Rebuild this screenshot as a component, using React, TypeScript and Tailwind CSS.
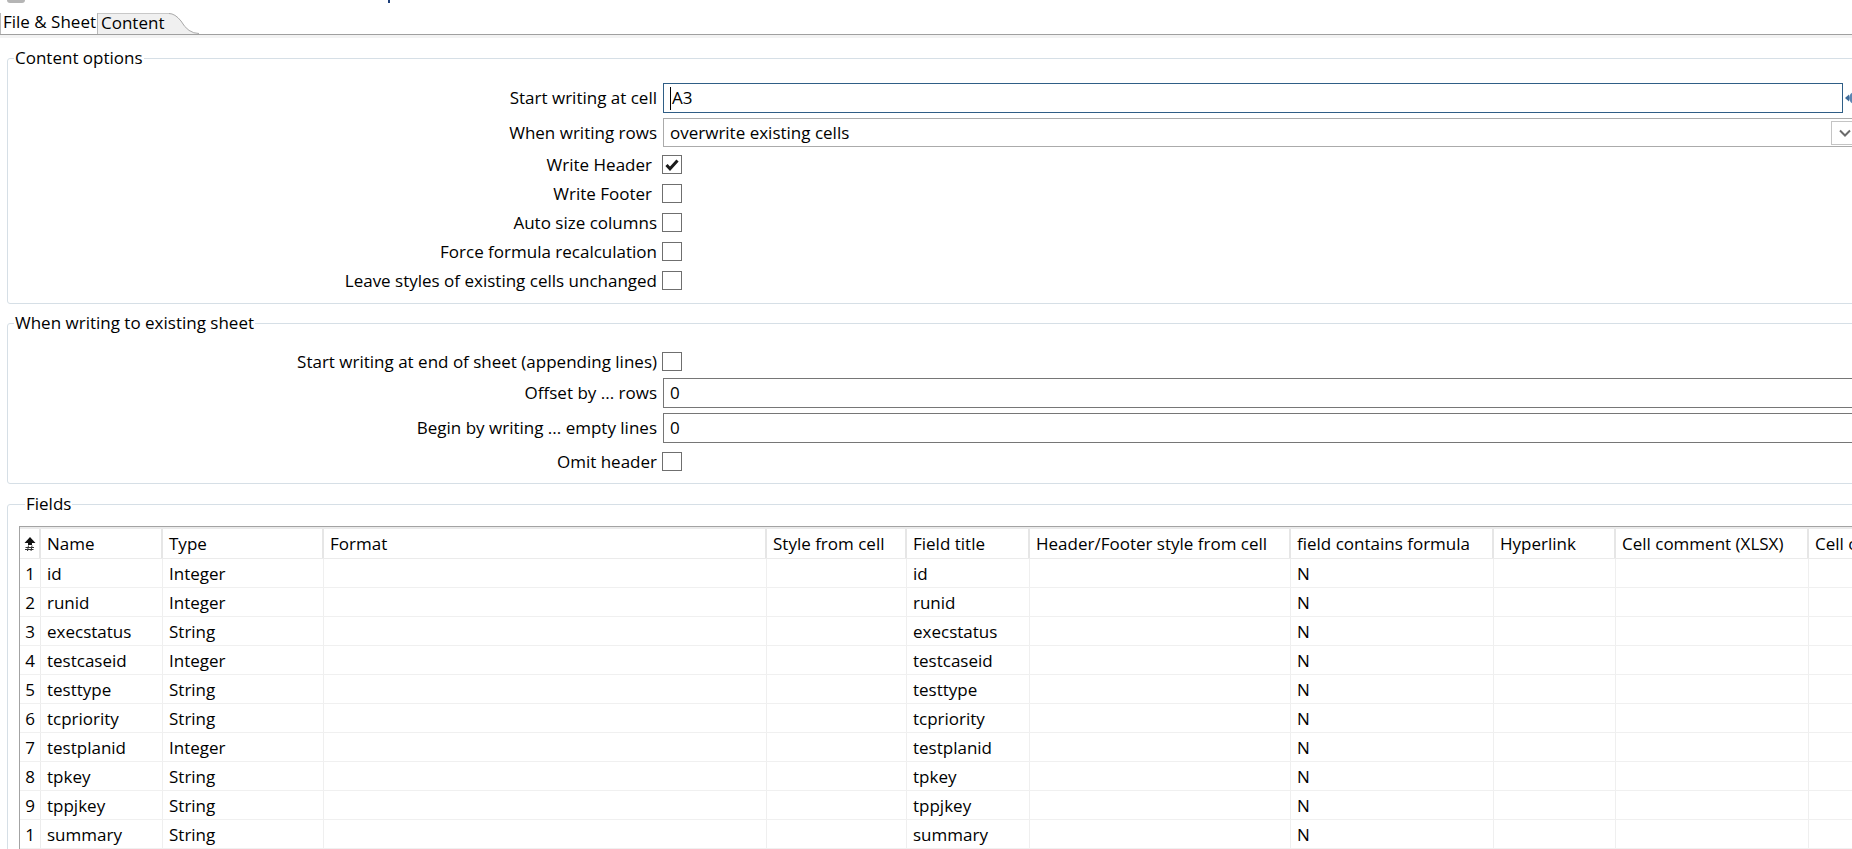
import React from 'react';

interface Col {
  title: string;
  w: string;
}

const columns: Col[] = [
  { title: 'Name', w: 'w-[122px]' },
  { title: 'Type', w: 'w-[161px]' },
  { title: 'Format', w: 'w-[443px]' },
  { title: 'Style from cell', w: 'w-[140px]' },
  { title: 'Field title', w: 'w-[123px]' },
  { title: 'Header/Footer style from cell', w: 'w-[261px]' },
  { title: 'field contains formula', w: 'w-[203px]' },
  { title: 'Hyperlink', w: 'w-[122px]' },
  { title: 'Cell comment (XLSX)', w: 'w-[193px]' },
  { title: 'Cell comment author', w: 'w-[200px]' },
];

const fields = [
  ['1', 'id', 'Integer'],
  ['2', 'runid', 'Integer'],
  ['3', 'execstatus', 'String'],
  ['4', 'testcaseid', 'Integer'],
  ['5', 'testtype', 'String'],
  ['6', 'tcpriority', 'String'],
  ['7', 'testplanid', 'Integer'],
  ['8', 'tpkey', 'String'],
  ['9', 'tppjkey', 'String'],
  ['1', 'summary', 'String'],
];

const CheckBox: React.FC<{ checked?: boolean }> = ({ checked }) => (
  <span className="w-[20px] h-[19px] border border-[#6f6f6f] bg-white flex items-center justify-center">
    {checked && (
      <svg width="14" height="12" viewBox="0 0 14 12">
        <path d="M1.5 6 L5 9.8 L12.5 1.5" fill="none" stroke="#1a1a1a" strokeWidth="3" />
      </svg>
    )}
  </span>
);

const Row: React.FC<{ label: string; h: string; extra?: string; labelPad?: string; children: React.ReactNode }> = ({
  label,
  h,
  extra = '',
  labelPad = '',
  children,
}) => (
  <div className={`flex items-center ${h} ${extra}`}>
    <div className={`w-[649px] shrink-0 text-right whitespace-nowrap ${labelPad}`}>{label}</div>
    <div className="ml-[5px] flex-1 flex items-center h-full">{children}</div>
  </div>
);

const Group: React.FC<{ title: string; extra: string; children: React.ReactNode }> = ({ title, extra, children }) => (
  <fieldset className={`ml-[7px] w-[1900px] border border-[#d6dfe6] rounded-[3px] ${extra}`}>
    <legend className="ml-[6px] px-[1px] leading-[22px]">{title}</legend>
    {children}
  </fieldset>
);

export default function App() {
  return (
    <div className="w-[1852px] h-[849px] overflow-hidden bg-white text-black text-[17px] leading-[22px] font-['Open_Sans',sans-serif]">
      {/* clipped title strip */}
      <div className="h-[13px] flex items-start">
        <span className="ml-[7px] w-[18px] h-[3px] rounded-b-full bg-[#b5b5b5]" />
        <span className="ml-[363px] w-[2px] h-[3px] bg-[#1d3f7a]" />
      </div>

      {/* tabs */}
      <div className="h-[22px] flex items-end border-b border-[#a0a0a0]">
        <div className="h-[21px] w-[98px] border-l border-r border-[#b9b9b9] bg-white pl-[2px] leading-[18px]">
          File &amp; Sheet
        </div>
        <div className="h-[21px] flex">
          <div className="h-[21px] w-[71px] border-t border-[#c8c8c8] bg-[#f0f0f0] pl-[3px] leading-[18px]">Content</div>
          <svg width="30" height="21" viewBox="0 0 30 21" className="block">
            <path d="M0 0.5 Q6 0.5 12 8 Q19 20.5 30 21 L0 21 Z" fill="#f0f0f0" />
            <path d="M0 0.5 Q6 0.5 12 8 Q19 20.5 30 20.5" fill="none" stroke="#a8a8a8" />
          </svg>
        </div>
      </div>
      <div className="h-[3px] bg-[#f3f3f3]" />

      <Group title="Content options" extra="mt-[9px] pt-[14px] pb-[8px]">
        <Row label="Start writing at cell" h="h-[30px]">
          <div className="ml-[1px] w-[1180px] h-full border border-[#2f5e86] flex items-center pl-[6px]">
            <span className="w-px h-[23px] bg-black" />
            <span className="ml-[1px]">A3</span>
          </div>
          <svg width="16" height="14" viewBox="0 0 16 14" className="ml-[2px] shrink-0">
            <path d="M0 7 L4 3.5 L4 10.5 Z" fill="#3e6b99" />
            <circle cx="10" cy="7" r="6" fill="#5b86b3" />
            <path d="M7.5 5 Q10 3 12 5 M8 9 Q10 11 12.5 9" stroke="#dfe9f3" strokeWidth="1.3" fill="none" />
          </svg>
        </Row>
        <Row label="When writing rows" h="h-[29px]" extra="mt-[5px]">
          <div className="ml-[1px] w-[1196px] h-full border border-[#ababab] flex items-center pl-[6px]">
            <span className="flex-1">overwrite existing cells</span>
            <span className="w-[27px] h-[24px] border border-[#c4c4c4] flex items-center justify-center">
              <svg width="12" height="8" viewBox="0 0 12 8">
                <path d="M1 1.5 L6 6.5 L11 1.5" fill="none" stroke="#6b6b6b" strokeWidth="2" />
              </svg>
            </span>
          </div>
        </Row>
        <Row label="Write Header" h="h-[29px]" extra="mt-[3px]" labelPad="pr-[5px]">
          <CheckBox checked />
        </Row>
        <Row label="Write Footer" h="h-[29px]" labelPad="pr-[5px]">
          <CheckBox />
        </Row>
        <Row label="Auto size columns" h="h-[29px]">
          <CheckBox />
        </Row>
        <Row label="Force formula recalculation" h="h-[29px]">
          <CheckBox />
        </Row>
        <Row label="Leave styles of existing cells unchanged" h="h-[29px]">
          <CheckBox />
        </Row>
      </Group>

      <Group title="When writing to existing sheet" extra="mt-[8px] pt-[13px] pb-[7px]">
        <Row label="Start writing at end of sheet (appending lines)" h="h-[29px]">
          <CheckBox />
        </Row>
        <Row label="Offset by ... rows" h="h-[30px]" extra="mt-[2px]">
          <div className="ml-[1px] w-[1250px] h-full border border-[#767676] flex items-center pl-[6px]">0</div>
        </Row>
        <Row label="Begin by writing ... empty lines" h="h-[30px]" extra="mt-[5px]">
          <div className="ml-[1px] w-[1250px] h-full border border-[#767676] flex items-center pl-[6px]">0</div>
        </Row>
        <Row label="Omit header" h="h-[29px]" extra="mt-[4px]">
          <CheckBox />
        </Row>
      </Group>

      <Group title="Fields" extra="mt-[9px] pt-[11px] pl-[11px] pb-[20px]">
        <div className="w-[2000px] border-t border-l border-[#a3a3a3]">
          <div className="h-[32px] flex border-t-2 border-b border-[#ebebeb]">
            <div className="w-[21px] shrink-0 h-full flex items-center justify-center border-r-2 border-[#e6e6e6]">
              <svg width="12" height="14" viewBox="0 0 12 14">
                <path d="M6 0 L11.5 6 L8 6 L8 8 L4 8 L4 6 L0.5 6 Z" fill="#111" />
                <path d="M4.5 8.5 L3.5 14 M8 8.5 L7 14 M1.5 10.5 L10 10.5 M1 12.5 L9.5 12.5" stroke="#333" strokeWidth="1" />
              </svg>
            </div>
            {columns.map((c) => (
              <div
                key={c.title}
                className={`${c.w} shrink-0 h-full flex items-center pt-[1px] px-[6px] border-r-2 border-[#e6e6e6] whitespace-nowrap overflow-hidden`}
              >
                {c.title}
              </div>
            ))}
          </div>
          {fields.map((f, i) => {
            const cells = [f[1], f[2], '', '', f[1], '', 'N', '', '', ''];
            return (
              <div key={i} className="h-[29px] flex border-b border-[#f0f0f0]">
                <div className="w-[21px] shrink-0 h-full flex items-center pt-[2px] justify-end pr-[5px] border-r border-[#ececec]">
                  {f[0]}
                </div>
                {cells.map((v, j) => (
                  <div
                    key={j}
                    className={`${columns[j].w} shrink-0 h-full flex items-center pt-[2px] px-[6px] border-r border-[#efefef] whitespace-nowrap overflow-hidden`}
                  >
                    {v}
                  </div>
                ))}
              </div>
            );
          })}
        </div>
      </Group>
    </div>
  );
}
